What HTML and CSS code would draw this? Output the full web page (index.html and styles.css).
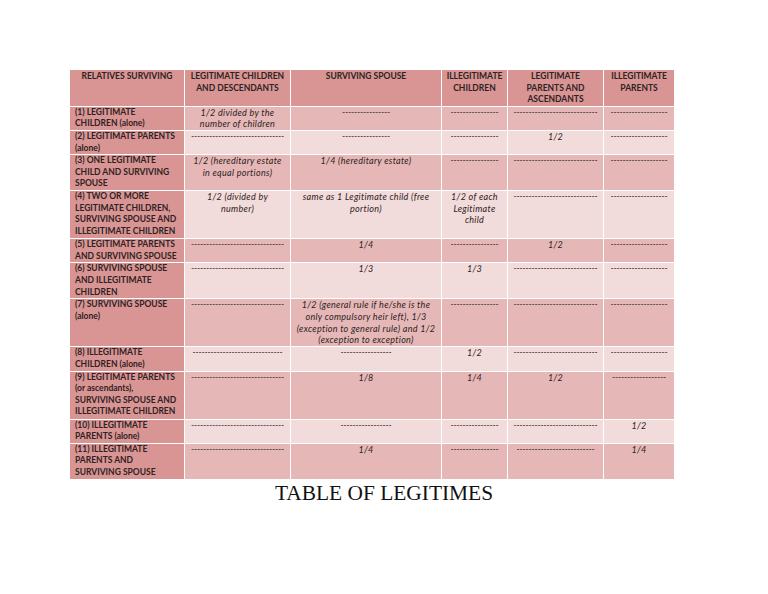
FILE: index.html
```html
<!DOCTYPE html>
<html>
<head>
<meta charset="utf-8">
<link rel="stylesheet" href="styles.css">
</head>
<body>
<div class="page">
<table class="legit">
  <colgroup>
    <col class="c1"><col class="c2"><col class="c3"><col class="c4"><col class="c5"><col class="c6">
  </colgroup>
  <thead>
    <tr class="h">
      <th>RELATIVES SURVIVING</th>
      <th>LEGITIMATE CHILDREN<br>AND DESCENDANTS</th>
      <th>SURVIVING SPOUSE</th>
      <th>ILLEGITIMATE<br>CHILDREN</th>
      <th>LEGITIMATE<br>PARENTS AND<br>ASCENDANTS</th>
      <th>ILLEGITIMATE<br>PARENTS</th>
    </tr>
  </thead>
  <tbody>
    <tr class="odd r23">
      <td class="lab">(1) LEGITIMATE<br>CHILDREN (alone)</td>
      <td class="it">1/2 divided by the<br>number of children</td>
      <td class="d">----------------</td>
      <td class="d">----------------</td>
      <td class="d">----------------------------</td>
      <td class="d">-------------------</td>
    </tr>
    <tr class="even r24">
      <td class="lab">(2) LEGITIMATE PARENTS<br>(alone)</td>
      <td class="d">-------------------------------</td>
      <td class="d">----------------</td>
      <td class="d">----------------</td>
      <td class="it">1/2</td>
      <td class="d">-------------------</td>
    </tr>
    <tr class="odd r37">
      <td class="lab">(3) ONE LEGITIMATE<br>CHILD AND SURVIVING<br>SPOUSE</td>
      <td class="it">1/2 (hereditary estate<br>in equal portions)</td>
      <td class="it">1/4 (hereditary estate)</td>
      <td class="d">----------------</td>
      <td class="d">----------------------------</td>
      <td class="d">-------------------</td>
    </tr>
    <tr class="even r48">
      <td class="lab">(4) TWO OR MORE<br>LEGITIMATE CHILDREN,<br>SURVIVING SPOUSE AND<br>ILLEGITIMATE CHILDREN</td>
      <td class="it">1/2 (divided by<br>number)</td>
      <td class="it">same as 1 Legitimate child (free<br>portion)</td>
      <td class="it">1/2 of each<br>Legitimate<br>child</td>
      <td class="d">----------------------------</td>
      <td class="d">-------------------</td>
    </tr>
    <tr class="odd r24">
      <td class="lab">(5) LEGITIMATE PARENTS<br>AND SURVIVING SPOUSE</td>
      <td class="d">-------------------------------</td>
      <td class="it">1/4</td>
      <td class="d">----------------</td>
      <td class="it">1/2</td>
      <td class="d">-------------------</td>
    </tr>
    <tr class="even r36">
      <td class="lab">(6) SURVIVING SPOUSE<br>AND ILLEGITIMATE<br>CHILDREN</td>
      <td class="d">-------------------------------</td>
      <td class="it">1/3</td>
      <td class="it">1/3</td>
      <td class="d">----------------------------</td>
      <td class="d">-------------------</td>
    </tr>
    <tr class="odd r48">
      <td class="lab">(7) SURVIVING SPOUSE<br>(alone)</td>
      <td class="d">-------------------------------</td>
      <td class="it">1/2 (general rule if he/she is the<br>only compulsory heir left), 1/3<br>(exception to general rule) and 1/2<br>(exception to exception)</td>
      <td class="d">----------------</td>
      <td class="d">----------------------------</td>
      <td class="d">-------------------</td>
    </tr>
    <tr class="even r24">
      <td class="lab">(8) ILLEGITIMATE<br>CHILDREN (alone)</td>
      <td class="d">------------------------------</td>
      <td class="d">-----------------</td>
      <td class="it">1/2</td>
      <td class="d">----------------------------</td>
      <td class="d">-------------------</td>
    </tr>
    <tr class="odd r48">
      <td class="lab">(9) LEGITIMATE PARENTS<br>(or ascendants),<br>SURVIVING SPOUSE AND<br>ILLEGITIMATE CHILDREN</td>
      <td class="d">-------------------------------</td>
      <td class="it">1/8</td>
      <td class="it">1/4</td>
      <td class="it">1/2</td>
      <td class="d">------------------</td>
    </tr>
    <tr class="even r24">
      <td class="lab">(10) ILLEGITIMATE<br>PARENTS (alone)</td>
      <td class="d">-------------------------------</td>
      <td class="d">-----------------</td>
      <td class="d">----------------</td>
      <td class="d">----------------------------</td>
      <td class="it">1/2</td>
    </tr>
    <tr class="odd r36">
      <td class="lab">(11) ILLEGITIMATE<br>PARENTS AND<br>SURVIVING SPOUSE</td>
      <td class="d">-------------------------------</td>
      <td class="it">1/4</td>
      <td class="d">----------------</td>
      <td class="d">--------------------------</td>
      <td class="it">1/4</td>
    </tr>
  </tbody>
</table>
<h1 class="title">TABLE OF LEGITIMES</h1>
</div>
</body>
</html>
```
FILE: styles.css
```css
html, body {
  margin: 0;
  padding: 0;
  background: #ffffff;
}
.page {
  width: 768px;
  height: 594px;
  padding-top: 69px;
  box-sizing: border-box;
}
.legit {
  margin-left: 69px;
  border-collapse: collapse;
  table-layout: fixed;
  width: 605px;
  font-family: Lato, "Liberation Sans", sans-serif;
  font-size: 8.5px;
  line-height: 11.6px;
  color: #2e2222;
}
.c1 { width: 115px; }
.c2 { width: 106px; }
.c3 { width: 151px; }
.c4 { width: 66px; }
.c5 { width: 96px; }
.c6 { width: 71px; }
.legit th, .legit td {
  border: 1.5px solid #ffffff;
  vertical-align: top;
  text-align: center;
  padding: 0 2px;
  white-space: nowrap;
  overflow: hidden;
}
.legit th {
  background: #d99594;
  font-weight: 700;
  height: 34px;
  padding-top: 1px;
}
.legit td.it {
  font-style: italic;
  font-size: 9px;
  letter-spacing: 0.3px;
}
.legit td.d {
  font-style: normal;
  letter-spacing: -0.15px;
  color: #3a3030;
}
.legit td.lab {
  background: #d99594;
  text-align: left;
  font-weight: 700;
  padding-left: 5px;
}
.odd td { background: #e5b8b7; }
.even td { background: #f2dbdb; }
.r23 td { height: 22px; }
.r24 td { height: 23px; }
.r36 td { height: 35px; }
.r37 td { height: 35px; }
.r48 td { height: 47px; }
.title {
  margin: 1px 0 0 0;
  text-align: center;
  font-family: "Liberation Serif", "DejaVu Serif", serif;
  font-weight: 400;
  font-size: 21.4px;
  line-height: 24px;
  color: #111111;
}
```
